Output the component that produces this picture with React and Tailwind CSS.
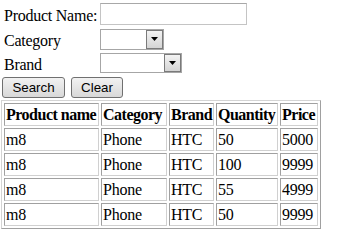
import React from "react";

function Arrow() {
  return (
    <div className="h-full w-[17px] border border-[#7a7a7a] bg-gradient-to-b from-[#f3f3f3] to-[#d4d4d4] flex items-center justify-center">
      <svg width="7" height="4" viewBox="0 0 7 4">
        <polygon points="0,0 7,0 3.5,4" fill="#000" />
      </svg>
    </div>
  );
}

function Select({ w, h }) {
  return (
    <div className={`flex justify-end border border-[#a6a6a6] bg-white ${w} ${h}`}>
      <Arrow />
    </div>
  );
}

const rows = [
  ["m8", "Phone", "HTC", "50", "5000"],
  ["m8", "Phone", "HTC", "100", "9999"],
  ["m8", "Phone", "HTC", "55", "4999"],
  ["m8", "Phone", "HTC", "50", "9999"],
];

const widths = ["w-[95px]", "w-[66px]", "w-[45px]", "w-[62px]", "w-[38px]"];
const heads = ["Product name", "Category", "Brand", "Quantity", "Price"];

const cell =
  "border border-t-[#a0a0a0] border-l-[#a0a0a0] border-b-[#d0d0d0] border-r-[#d0d0d0] px-px py-px h-[23px] leading-[19px] text-left align-middle whitespace-nowrap overflow-hidden";

export default function App() {
  return (
    <div className="w-[353px] h-[250px] bg-white text-black font-['Liberation_Serif',serif] text-[16px]">
      <div className="flex items-center h-[27px]">
        <div className="w-[100px] shrink-0 pl-[4px] pt-[4px] leading-[19px] whitespace-nowrap tracking-[-0.25px]">Product Name:</div>
        <div className="w-[147px] h-[22px] border border-[#c4c4c4] border-t-[#a8a8a8] bg-white" />
      </div>
      <div className="flex items-center h-[24px]">
        <div className="w-[100px] shrink-0 pl-[4px] pt-[3px] leading-[19px] tracking-[-0.25px]">Category</div>
        <Select w="w-[64px]" h="h-[21px]" />
      </div>
      <div className="flex items-center h-[23px]">
        <div className="w-[100px] shrink-0 pl-[4px] pt-[3px] leading-[19px] tracking-[-0.25px]">Brand</div>
        <Select w="w-[82px]" h="h-[20px]" />
      </div>
      <div className="flex gap-[6px] mt-[3px] pl-[2px] font-['Liberation_Sans',sans-serif] text-[13.33px]">
        <button className="w-[63px] h-[21px] rounded-[3px] border border-[#707070] bg-gradient-to-b from-[#f2f2f2] to-[#d8d8d8] leading-[19px]">
          Search
        </button>
        <button className="w-[52px] h-[21px] rounded-[3px] border border-[#707070] bg-gradient-to-b from-[#f2f2f2] to-[#d8d8d8] leading-[19px]">
          Clear
        </button>
      </div>
      <table className="mt-[2px] ml-px w-[320px] table-fixed border-separate border-spacing-[2px] border border-t-[#d4d4d4] border-l-[#d4d4d4] border-b-[#a0a0a0] border-r-[#a0a0a0]">
        <thead>
          <tr>
            {heads.map((h, i) => (
              <th key={h} className={`${cell} ${widths[i]} font-bold tracking-[-0.5px]`}>
                {h}
              </th>
            ))}
          </tr>
        </thead>
        <tbody>
          {rows.map((r, ri) => (
            <tr key={ri}>
              {r.map((c, ci) => (
                <td key={ci} className={`${cell} ${widths[ci]} tracking-[-0.25px]`}>
                  {c}
                </td>
              ))}
            </tr>
          ))}
        </tbody>
      </table>
    </div>
  );
}
